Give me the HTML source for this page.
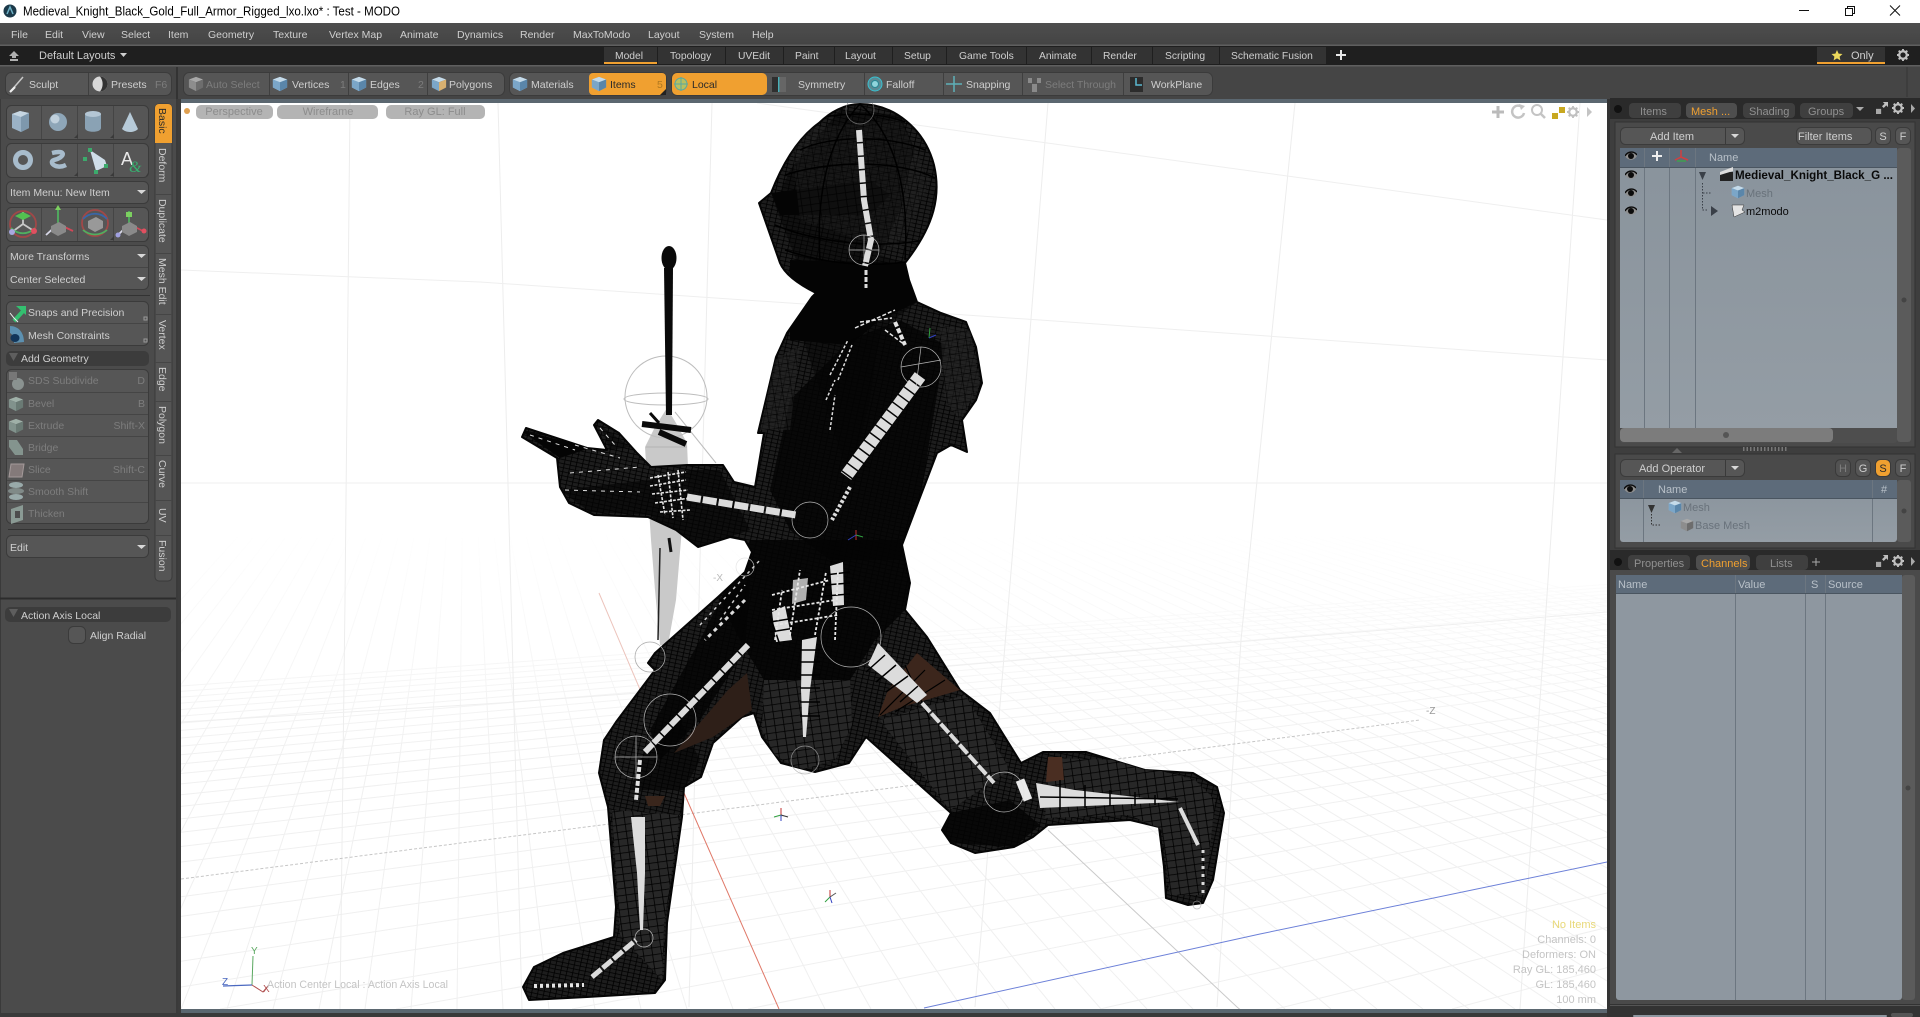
<!DOCTYPE html>
<html><head><meta charset="utf-8"><title>Medieval_Knight_Black_Gold_Full_Armor_Rigged_lxo.lxo* : Test - MODO</title>
<style>
html,body{margin:0;padding:0;background:#3c3c3c;overflow:hidden}
svg{display:block}
text{font-family:"Liberation Sans",sans-serif;font-size:11px;fill:#cfcfcf}
g.s text{font-size:10.5px}
g.t text{font-size:10.3px}
.d{fill:#7d7d7d}
.k{fill:#2a2a2a}
.h{fill:#b8c0c8}
.o{fill:#f0a030}
.r{text-anchor:end}
.m{text-anchor:middle}
.b{fill:#565656;stroke:#3b3b3b}
.v{fill:#c4c4c4}
</style></head><body>
<svg xmlns="http://www.w3.org/2000/svg" width="1920" height="1017" viewBox="0 0 1920 1017">
<defs>
<linearGradient id="fade" x1="0" y1="0" x2="0" y2="1"><stop offset="0" stop-color="#000"/><stop offset="1" stop-color="#fff"/></linearGradient>
<linearGradient id="mb" x1="0" y1="0" x2="0" y2="1"><stop offset="0" stop-color="#4e4e4e"/><stop offset="1" stop-color="#444"/></linearGradient>
<linearGradient id="lst" x1="0" y1="0" x2="0" y2="1"><stop offset="0" stop-color="#89939c"/><stop offset="1" stop-color="#949da5"/></linearGradient>
<mask id="gm" maskUnits="userSpaceOnUse" x="181" y="103" width="1426" height="906"><rect x="181" y="530" width="1426" height="230" fill="url(#fade)"/><rect x="181" y="760" width="1426" height="250" fill="#fff"/></mask>
<clipPath id="vp"><rect x="181" y="103" width="1426" height="906"/></clipPath>
<pattern id="mesh" width="6" height="4" patternUnits="userSpaceOnUse" patternTransform="rotate(12)"><rect width="6" height="4" fill="#1d1d1d"/><path d="M0 0H6M0 0V4" stroke="#000" stroke-width="1.600"/></pattern>
<pattern id="meshb" width="9" height="7" patternUnits="userSpaceOnUse" patternTransform="rotate(-8)"><rect width="9" height="7" fill="#272727"/><path d="M0 0H9M0 0V7" stroke="#000" stroke-width="1.600"/></pattern>
<path id="bp" d="M860 104C895 104 925 130 934 165C941 195 935 225 905 263L909 280L917 302L941 313L966 322L976 347L982 383L976 400L962 420L967 452L951 445L937 453L919 500L902 545L910 583L905 610L927 637L960 690L990 713L1021 763L1043 752L1086 752L1145 770L1193 773L1217 787L1224 813L1213 880L1203 903L1188 905L1166 898L1164 867L1159 827L1130 820L1048 825L1033 837L1014 847L975 853L951 843L942 830L951 813L866 737L849 763L815 772L781 763L762 737L754 713L742 717L713 743L701 777L684 787L682 817L667 923L665 980L655 993L587 997L529 1000L523 987L534 967L563 953L614 937L616 907L608 807L599 773L604 740L616 722L655 670L648 663L655 653L718 597L745 572L752 552L745 540L730 537L698 547L676 530L648 517L594 515L569 503L560 487L557 458L522 437L526 428L587 448L607 450L594 425L598 420L619 433L637 453L651 467L687 465L723 465L734 482L755 487L764 433L758 433L776 357L787 333L812 297L816 293C800 285 785 275 780 263L759 203L771 193C780 170 795 140 819 123C830 112 845 104 860 104Z"/>
<clipPath id="bc"><use href="#bp"/></clipPath>
<symbol id="cube" viewBox="0 0 18 18"><path d="M9 1L17 4V13L9 17L1 13V4Z" fill="#8fb4d2"/><path d="M1 4L9 7L17 4L9 1Z" fill="#c5dbea"/><path d="M9 7V17L1 13V4Z" fill="#7ba6c8"/><path d="M9 7V17L17 13V4Z" fill="#5a86aa"/></symbol>
<symbol id="cubeg" viewBox="0 0 18 18"><path d="M1 4L9 7L17 4L9 1Z" fill="#a8a8a8"/><path d="M9 7V17L1 13V4Z" fill="#8d8d8d"/><path d="M9 7V17L17 13V4Z" fill="#6d6d6d"/></symbol>
<symbol id="cubeo" viewBox="0 0 18 18"><path d="M1 4L9 7L17 4L9 1Z" fill="#c5dbea"/><path d="M9 7V17L1 13V4Z" fill="#7ba6c8"/><path d="M9 7V17L17 13V4Z" fill="#d8b070"/></symbol>
<symbol id="cubed" viewBox="0 0 18 18"><path d="M1 4L9 7L17 4L9 1Z" fill="#9fb0a8"/><path d="M9 7V17L1 13V4Z" fill="#81928c"/><path d="M9 7V17L17 13V4Z" fill="#6a7a74"/></symbol>
<symbol id="eye" viewBox="0 0 12 10"><path d="M0 5C3 0 9 0 12 5C9 10 3 10 0 5Z" fill="#8f8f8f"/><circle cx="6" cy="5" r="3" fill="#0c0c0c"/><path d="M0 5C3 0 9 0 12 4" fill="none" stroke="#0c0c0c" stroke-width="1.400"/></symbol>
<symbol id="gear" viewBox="0 0 14 14"><circle cx="7" cy="7" r="4.400" fill="none" stroke="#c0c0c0" stroke-width="2.600"/><path d="M7 0V3M7 11V14M0 7H3M11 7H14M2 2L4 4M10 10L12 12M2 12L4 10M10 4L12 2" stroke="#c0c0c0" stroke-width="2.200"/></symbol>
<symbol id="exp" viewBox="0 0 14 14"><path d="M0 14V8H6V14Z" fill="#a8a8a8"/><path d="M8 0H14V6L12 4L9 7L7 5L10 2Z" fill="#c0c0c0"/></symbol>
</defs>

<!-- title bar -->
<rect width="1920" height="23" fill="#fff"/>
<circle cx="10" cy="11" r="6.500" fill="#1c3a4a"/><path d="M7 14L10 7L13 14" fill="none" stroke="#6fb3c8" stroke-width="1.500"/>
<text x="23" y="15.500" textLength="377" lengthAdjust="spacingAndGlyphs" style="font-size:12.500px;fill:#000">Medieval_Knight_Black_Gold_Full_Armor_Rigged_lxo.lxo* : Test - MODO</text>
<path d="M1799 10.500H1809" stroke="#111"/>
<path d="M1845.500 8.500H1852.500V15.500H1845.500ZM1847.500 8.500V6.500H1854.500V13.500H1852.500" fill="none" stroke="#111"/>
<path d="M1890 5.500L1900 15.500M1900 5.500L1890 15.500" stroke="#111"/>

<!-- menu -->
<rect y="23" width="1920" height="22" fill="url(#mb)"/>
<rect y="44.500" width="1920" height="1.500" fill="#5f5f5f"/>
<g class="s"><text x="11" y="38">File</text><text x="45" y="38">Edit</text><text x="82" y="38">View</text><text x="121" y="38">Select</text><text x="168" y="38">Item</text><text x="208" y="38">Geometry</text><text x="273" y="38">Texture</text><text x="329" y="38">Vertex Map</text><text x="400" y="38">Animate</text><text x="457" y="38">Dynamics</text><text x="520" y="38">Render</text><text x="573" y="38">MaxToModo</text><text x="648" y="38">Layout</text><text x="699" y="38">System</text><text x="752" y="38">Help</text></g>

<!-- layout row -->
<rect y="46" width="1920" height="19" fill="#1f1f1f"/>
<path d="M9 56L14 51L19 56H16V58H12V56ZM10 59H18V61H10Z" fill="#b0b0b0"/>
<text x="39" y="59">Default Layouts</text><path d="M120 53H127L123.500 57Z" fill="#cfcfcf"/>
<g fill="#333">
<rect x="604" y="47" width="53" height="17"/><rect x="658" y="47" width="67" height="17"/><rect x="726" y="47" width="57" height="17"/><rect x="784" y="47" width="50" height="17"/><rect x="835" y="47" width="57" height="17"/><rect x="893" y="47" width="53" height="17"/><rect x="947" y="47" width="79" height="17"/><rect x="1027" y="47" width="64" height="17"/><rect x="1092" y="47" width="60" height="17"/><rect x="1153" y="47" width="66" height="17"/><rect x="1220" y="47" width="106" height="17"/>
<rect x="1817" y="47" width="68" height="17"/></g>
<rect x="604" y="62" width="53" height="2" fill="#f0a030"/><rect x="1817" y="62" width="68" height="2" fill="#f0a030"/>
<g class="t"><text x="615" y="59">Model</text><text x="670" y="59">Topology</text><text x="738" y="59">UVEdit</text><text x="795" y="59">Paint</text><text x="845" y="59">Layout</text><text x="904" y="59">Setup</text><text x="959" y="59">Game Tools</text><text x="1039" y="59">Animate</text><text x="1103" y="59">Render</text><text x="1165" y="59">Scripting</text><text x="1231" y="59">Schematic Fusion</text></g>
<path d="M1341 50V60M1336 55H1346" stroke="#e8e8e8" stroke-width="2"/>
<path d="M1837 50L1838.600 53.600L1842.500 54L1839.600 56.600L1840.400 60.400L1837 58.400L1833.600 60.400L1834.400 56.600L1831.500 54L1835.400 53.600Z" fill="#ecd85c"/>
<text x="1851" y="59">Only</text>
<use href="#gear" x="1897" y="49" width="12" height="12"/>

<!-- toolbar row -->
<rect y="65" width="1920" height="1.500" fill="#5f5f5f"/>
<rect y="66.500" width="1920" height="33" fill="#454545"/>
<rect x="176" y="67" width="2" height="32" fill="#333"/>
<rect x="1906" y="67" width="2" height="30" fill="#3d3d3d"/>
<rect x="5.500" y="72.500" width="166" height="23" rx="6" class="b"/>
<rect x="183.500" y="72.500" width="321" height="23" rx="6" class="b"/>
<rect x="509.500" y="72.500" width="157" height="23" rx="6" class="b"/>
<rect x="671.500" y="72.500" width="541" height="23" rx="6" class="b"/>
<path d="M88.500 73V95M269.500 73V95M348.500 73V95M427.500 73V95M864.500 73V95M943.500 73V95M1022.500 73V95M1123.500 73V95" stroke="#3f3f3f"/>
<rect x="589" y="73" width="77" height="22" rx="4" fill="#f0a030"/>
<rect x="672" y="73" width="95" height="22" rx="5" fill="#f0a030"/>
<path d="M10 92L23 77" stroke="#c8c8c8" stroke-width="1.500"/><path d="M10 92L15 87" stroke="#eee" stroke-width="2.200"/>
<circle cx="100" cy="84" r="7.500" fill="#d8d8d8"/><path d="M100 76.500A7.500 7.500 0 0 1 100 91.500A12 12 0 0 0 100 76.500Z" fill="#333"/>
<use href="#cubeg" x="188" y="76" width="16" height="16"/>
<use href="#cube" x="272" y="76" width="16" height="16"/>
<use href="#cube" x="351" y="76" width="16" height="16"/>
<use href="#cubeo" x="431" y="76" width="16" height="16"/>
<use href="#cube" x="512" y="76" width="16" height="16"/>
<use href="#cube" x="591" y="76" width="16" height="16"/>
<path d="M666 89L660 95H666Z" fill="#222"/>
<circle cx="681" cy="84" r="6" fill="#b8c060" stroke="#5aa8a0"/><path d="M681 77V91M674 84H688" stroke="#5aa8a0"/>
<rect x="772" y="77" width="6" height="15" fill="#2f2f2f"/><rect x="778" y="77" width="1.500" height="15" fill="#4ab0b8"/><rect x="780" y="77" width="6" height="15" fill="#666"/>
<circle cx="875" cy="84" r="7" fill="#5a8a94" stroke="#39c0d0"/><circle cx="875" cy="84" r="3.500" fill="#8fd4dc" stroke="#2a8894"/>
<path d="M954 76V92M946 84H962" stroke="#5eb0b8" stroke-width="1.500"/>
<rect x="1028" y="78" width="4" height="5" fill="#8a8a8a"/><rect x="1037" y="78" width="4" height="5" fill="#8a8a8a"/><rect x="1032" y="84" width="5" height="8" fill="#8a8a8a"/>
<rect x="1130" y="77" width="13" height="15" fill="#2c2c2c"/><path d="M1136 78V85H1142" fill="none" stroke="#5bb8d0" stroke-width="1.500"/>
<g class="s">
<text x="29" y="88">Sculpt</text><text x="111" y="88">Presets</text><text x="155" y="88" class="d">F6</text>
<text x="206" y="88" class="d">Auto Select</text><text x="292" y="88">Vertices</text><text x="340" y="88" class="d">1</text>
<text x="370" y="88">Edges</text><text x="418" y="88" class="d">2</text><text x="449" y="88">Polygons</text>
<text x="531" y="88">Materials</text><text x="610" y="88" class="k">Items</text><text x="657" y="88" style="fill:#b07820">5</text>
<text x="692" y="88" class="k">Local</text><text x="798" y="88">Symmetry</text><text x="886" y="88">Falloff</text><text x="966" y="88">Snapping</text><text x="1045" y="88" class="d">Select Through</text><text x="1151" y="88">WorkPlane</text>
</g>

<!-- left panel -->
<rect y="99" width="178" height="918" fill="#4b4b4b"/>
<rect x="176" y="99" width="5" height="918" fill="#3a3a3a"/>
<rect x="0" y="99" width="1" height="918" fill="#3a3a3a"/>
<g>
<rect x="6.500" y="105.500" width="142" height="34" rx="5" class="b"/><rect x="6.500" y="143.500" width="142" height="34" rx="5" class="b"/>
<rect x="6.500" y="181.500" width="142" height="22" rx="5" class="b"/>
<rect x="6.500" y="207.500" width="142" height="34" rx="5" class="b"/>
<rect x="6.500" y="245.500" width="142" height="44" rx="5" class="b"/>
<rect x="6.500" y="301.500" width="142" height="44" rx="5" class="b"/>
<rect x="6" y="351" width="143" height="15" rx="5" fill="#3c3c3c"/>
<rect x="6.500" y="369.500" width="142" height="154" rx="5" class="b"/>
<rect x="6.500" y="535.500" width="142" height="22" rx="5" class="b"/>
<rect x="5" y="607" width="166" height="15" rx="5" fill="#3c3c3c"/>
</g>
<path d="M41.500 106V139M77.500 106V139M113.500 106V139M41.500 144V177M77.500 144V177M113.500 144V177M41.500 208V241M77.500 208V241M113.500 208V241M7 267.500H148M7 323.500H148M7 392.500H148M7 414.500H148M7 436.500H148M7 458.500H148M7 480.500H148M7 502.500H148" stroke="#454545"/>
<path d="M8 295.500H150M8 529.500H150" stroke="#333"/>
<path d="M0 598.500H176" stroke="#2c2c2c" stroke-width="2"/>
<!-- primitives -->
<path d="M12 114L20 111L29 113V128L21 132L12 128Z" fill="#9ab2c6"/><path d="M12 114L21 117L29 113L20 111Z" fill="#c6d6e2"/><path d="M21 117V132L29 128V113Z" fill="#7e98ad"/>
<circle cx="58" cy="122" r="9" fill="#8ea6b8"/><circle cx="55" cy="119" r="4.500" fill="#c0d0dc"/>
<path d="M85 114V128C85 133 101 133 101 128V114Z" fill="#8aa2b4"/><ellipse cx="93" cy="114" rx="8" ry="3" fill="#b4c6d4"/>
<path d="M130 112L138 129C134 133 126 133 122 129Z" fill="#b6cad8"/>
<circle cx="23" cy="160" r="7.500" fill="none" stroke="#a8bccc" stroke-width="5"/>
<path d="M52 153C68 149 64 158 54 160C48 162 56 170 66 165" fill="none" stroke="#a8bccc" stroke-width="4.500"/>
<path d="M90 150L105 160L107 166L96 171Z" fill="#cfdde8"/><g fill="#3caa6c"><rect x="88" y="148" width="4" height="4"/><rect x="104" y="164" width="4" height="4"/><rect x="94" y="170" width="4" height="4"/><rect x="83" y="157" width="4" height="4"/></g>
<text x="121" y="165" style="font-size:18px;fill:#e8e8e8">A</text><text x="129" y="172" style="font-size:16px;fill:#38b070;font-family:'Liberation Serif',serif;font-style:italic">&amp;</text>
<!-- gizmos -->
<g fill="none" stroke-width="1.800">
<circle cx="23" cy="224" r="13" stroke="#a04848"/><path d="M23 212V224L12 232M23 224L34 231" stroke="#c8c8c8"/><path d="M11 228C18 235 28 235 35 228" stroke="#50b060"/>
<path d="M58 208V224" stroke="#50b060"/><path d="M58 224L73 231" stroke="#d04858"/><path d="M58 224L46 235" stroke="#d8d8e8"/>
<circle cx="95" cy="223" r="13" stroke="#a04848"/><path d="M83 219C90 212 100 212 107 219" stroke="#3a66a8"/><path d="M83 230C90 236 100 236 107 230" stroke="#50b060"/>
<path d="M129 211V224" stroke="#50b060"/><path d="M129 224L143 231" stroke="#d04858"/><path d="M129 224L118 235" stroke="#d8d8e8"/>
</g>
<path d="M15 216L23 212L31 216L23 220Z" fill="#54c050"/><circle cx="12" cy="232" r="3" fill="#a8a8e0"/><circle cx="34" cy="231" r="3" fill="#e05060"/>
<path d="M51 226L59 222L66 226V232L58 236L51 232Z" fill="#8a8a8a"/><path d="M55 210L58 205L61 210Z" fill="#7cd060"/>
<path d="M88 221L96 217L103 221V228L95 232L88 228Z" fill="#999"/>
<path d="M122 226L130 222L137 226V232L129 236L122 232Z" fill="#8a8a8a"/><rect x="126" y="212" width="6" height="5" fill="#7cd060"/><circle cx="144" cy="231" r="2.500" fill="#e05060"/><circle cx="118" cy="235" r="2.500" fill="#a0a0e0"/>
<g fill="#3a3a3a"><path d="M74 138L78 134V138ZM110 138L114 134V138ZM146 138L148 135V138ZM74 176L78 172V176ZM110 176L114 172V176ZM146 176L148 173V176ZM146 240L148 237V240ZM110 240L114 236V240Z"/></g>
<g class="s">
<text x="10" y="196">Item Menu: New Item</text>
<text x="10" y="260">More Transforms</text>
<text x="10" y="283">Center Selected</text>
<text x="28" y="316">Snaps and Precision</text><text x="28" y="339">Mesh Constraints</text>
<text x="21" y="362">Add Geometry</text>
<text x="28" y="384" class="d">SDS Subdivide</text><text x="145" y="384" class="d r">D</text>
<text x="28" y="407" class="d">Bevel</text><text x="145" y="407" class="d r">B</text>
<text x="28" y="429" class="d">Extrude</text><text x="145" y="429" class="d r">Shift-X</text>
<text x="28" y="451" class="d">Bridge</text>
<text x="28" y="473" class="d">Slice</text><text x="145" y="473" class="d r">Shift-C</text>
<text x="28" y="495" class="d">Smooth Shift</text>
<text x="28" y="517" class="d">Thicken</text>
<text x="10" y="551">Edit</text>
<text x="21" y="619">Action Axis Local</text>
<text x="90" y="639">Align Radial</text>
</g>
<path d="M137 190H146L141.500 194Z" fill="#d8d8d8"/><path d="M137 254H146L141.500 258Z" fill="#d8d8d8"/><path d="M137 277H146L141.500 281Z" fill="#d8d8d8"/>
<path d="M14 321L25 309" stroke="#34c070" stroke-width="4"/><path d="M16 306H26V315Z" fill="#34c070"/><path d="M10 313L14 318L18 322" stroke="#eee" fill="none"/>
<path d="M10 326C18 326 24 332 24 342L14 343C14 337 12 334 10 333Z" fill="#5c90b0"/><ellipse cx="15" cy="338" rx="4.500" ry="4" fill="#12365a"/>
<rect x="144" y="317" width="3" height="3" fill="none" stroke="#999"/><rect x="144" y="339" width="3" height="3" fill="none" stroke="#999"/>
<path d="M9 353H18L13.500 361Z" fill="#5e5e5e"/>
<circle cx="18" cy="384" r="6" fill="#8a9290"/><rect x="9" y="372" width="8" height="8" fill="#777"/>
<use href="#cubed" x="8" y="396" width="16" height="16"/><use href="#cubed" x="8" y="418" width="16" height="16"/>
<path d="M9 440H17L23 449V455H15L9 447Z" fill="#84948e"/>
<path d="M11 464H24L22 477H9Z" fill="#847a7a" stroke="#a49a9a"/>
<ellipse cx="16" cy="485" rx="7" ry="3" fill="#9aa"/><ellipse cx="16" cy="491" rx="8" ry="3" fill="#808a88"/><ellipse cx="16" cy="497" rx="7" ry="3" fill="#9aa"/>
<path d="M11 509L23 505V520L11 524Z" fill="#8a9a94"/><rect x="15" y="511" width="5" height="7" fill="#4d4d4d"/>
<path d="M137 545H146L141.500 549Z" fill="#d8d8d8"/>
<path d="M9 609H18L13.500 617Z" fill="#5e5e5e"/>
<rect x="68.500" y="626.500" width="17" height="17" rx="5" class="b"/>

<!-- vertical tabs -->
<path d="M155 108a4 4 0 0 1 4-4h9a4 4 0 0 1 4 4v469a4 4 0 0 1-4 4h-9a4 4 0 0 1-4-4Z" fill="#555" stroke="#3a3a3a"/>
<path d="M155 108a4 4 0 0 1 4-4h9a4 4 0 0 1 4 4v35h-17Z" fill="#f0a030"/>
<path d="M155 194.500H172M155 253.500H172M155 314.500H172M155 362.500H172M155 401.500H172M155 455.500H172M155 500.500H172M155 535.500H172" stroke="#454545"/>
<g class="s">
<text transform="translate(159 108) rotate(90)" class="k">Basic</text>
<text transform="translate(159 148) rotate(90)">Deform</text>
<text transform="translate(159 199) rotate(90)">Duplicate</text>
<text transform="translate(159 258) rotate(90)">Mesh Edit</text>
<text transform="translate(159 320) rotate(90)">Vertex</text>
<text transform="translate(159 367) rotate(90)">Edge</text>
<text transform="translate(159 406) rotate(90)">Polygon</text>
<text transform="translate(159 460) rotate(90)">Curve</text>
<text transform="translate(159 508) rotate(90)">UV</text>
<text transform="translate(159 540) rotate(90)">Fusion</text>
</g>

<!-- viewport -->
<rect x="178" y="99" width="1432" height="918" fill="#3c3c3c"/>
<rect x="181" y="99" width="1426" height="4" fill="#5b6770"/>
<rect x="181" y="1009" width="1426" height="4" fill="#5b6770"/>
<rect x="181" y="103" width="1426" height="906" fill="#fff"/>
<g clip-path="url(#vp)">
<g mask="url(#gm)" fill="none" stroke="#f0f0f0" stroke-width="1">
<path d="M465 284L-187 1009M465 284L-141 1009M465 284L-95 1009M465 284L-49 1009M465 284L-3 1009M465 284L43 1009M465 284L89 1009M465 284L135 1009M465 284L181 1009M465 284L227 1009M465 284L273 1009M465 284L319 1009M465 284L365 1009M465 284L411 1009M465 284L457 1009M465 284L503 1009M465 284L549 1009M465 284L595 1009M465 284L641 1009M465 284L687 1009M465 284L733 1009M465 284L825 1009M465 284L871 1009M465 284L917 1009M465 284L963 1009M465 284L1009 1009M465 284L1055 1009M465 284L1101 1009M465 284L1147 1009M465 284L1193 1009M465 284L1285 1009M465 284L1331 1009M465 284L1377 1009M465 284L1423 1009M465 284L1469 1009M465 284L1515 1009M465 284L1561 1009M465 284L1607 1009M465 284L1653 1009M465 284L1699 1009M465 284L1745 1009M465 284L1791 1009M465 284L1837 1009M465 284L1883 1009M465 284L1929 1009M465 284L1975 1009M465 284L2021 1009M465 284L2067 1009M465 284L2113 1009M465 284L2159 1009M465 284L2205 1009M465 284L2251 1009M465 284L2297 1009M465 284L2343 1009M465 284L2389 1009M465 284L2435 1009M465 284L2481 1009M465 284L2527 1009M465 284L2573 1009M465 284L2619 1009M465 284L2665 1009M465 284L2711 1009M465 284L2757 1009M465 284L2803 1009M465 284L2849 1009M465 284L2895 1009M465 284L2941 1009M465 284L2987 1009M465 284L3033 1009M465 284L3079 1009"/>
<path d="M3565 445L1628 1009M3565 445L1452 1009M3565 445L1276 1009M3565 445L1100 1009M3565 445L748 1009M3565 445L572 1009M3565 445L396 1009M3565 445L220 1009M3565 445L44 1009M3565 445L-132 1009M3565 445L-308 1009M3565 445L-484 1009M3565 445L-660 1009M3565 445L-1012 1009M3565 445L-1188 1009M3565 445L-1364 1009M3565 445L-1540 1009M3565 445L-1716 1009M3565 445L-1892 1009M3565 445L-2068 1009M3565 445L-2244 1009M3565 445L-2420 1009M3565 445L-2596 1009M3565 445L-2772 1009M3565 445L-2948 1009M3565 445L-3124 1009M3565 445L-3300 1009M3565 445L-3476 1009M3565 445L-3652 1009M3565 445L-3828 1009M3565 445L-4004 1009M3565 445L-4180 1009M3565 445L-4356 1009"/>
</g>
<!-- major faint lines -->
<path d="M712 103L700 560L689 1007M1048 103L1012 560L975 1007M498 103L510 560L522 1009M1295 103L1241 640L1217 1007M1580 103L1540 700L1520 1009M350 103L345 600L340 1009" fill="none" stroke="#ededed"/>
<path d="M181 270L480 282L1040 320L1607 360M181 483H1607M757 103L1040 142L1607 220M181 722L500 703L640 693L985 663L1260 640L1607 612" fill="none" stroke="#efefef"/>
<!-- axes -->
<path d="M1048 830L1237 1007L1243 1012" fill="none" stroke="#cacaca"/>
<path d="M181 879L500 838L1227 745L1420 720" fill="none" stroke="#c6c6c6" stroke-dasharray="3 2"/>
<path d="M599 593L684 793" stroke="#ecc4bc" fill="none"/><path d="M684 793L779 1009" stroke="#e07868" fill="none"/>
<path d="M924 1008L1260 934L1607 862" stroke="#6c80d8" fill="none"/>
<text x="1426" y="714" style="fill:#999;font-size:10px">-Z</text>
<text x="713" y="581" style="fill:#bbb;font-size:10px">-X</text>

<!-- sword -->
<path d="M667 408L676 423L687 443L688 467L681 540L676 600L668 645L660 645L655 590L651 540L645 447L655 427Z" fill="#c9c9c9"/>
<path d="M646 447H687" stroke="#b4b4b4"/>
<circle cx="666" cy="397" r="41" fill="none" stroke="#bdbdbd"/><ellipse cx="666" cy="399" rx="42" ry="6" fill="none" stroke="#bdbdbd"/><path d="M675 412L716 463" stroke="#bdbdbd"/>
<ellipse cx="669" cy="258" rx="7.500" ry="12" fill="#0a0a0a"/>
<path d="M664 268H673L672 415H666Z" fill="#0a0a0a"/>
<path d="M642 424L691 430M659 432L686 444" stroke="#0a0a0a" stroke-width="6"/><path d="M650 413L659 423" stroke="#0a0a0a" stroke-width="3"/>
<path d="M669 538L671 552" stroke="#111" stroke-width="3"/>
<path d="M660 548L658 640" stroke="#222" stroke-width="1.500"/>

<!-- silhouette -->
<use href="#bp" fill="url(#mesh)" stroke="#050505" stroke-width="2" stroke-linejoin="round"/>
<g clip-path="url(#bc)">
<!-- dense black -->
<g fill="#040404">
<path d="M840 110L900 115L915 150L905 180L900 210L880 255L905 263L917 302L880 330L870 400L850 480L790 300L816 293L800 270L775 205L790 170Z" opacity=".5"/>
<path d="M771 193L870 180L890 195L870 215L780 215Z"/>
<path d="M790 260L905 263L917 302L880 320L850 345L790 340Z"/>
<path d="M850 340L900 320L945 345L920 500L900 560L830 560L790 530L770 490L790 400Z" opacity=".8"/>
<path d="M750 540L900 540L910 583L905 610L875 640L850 680L770 690L740 640L720 600Z" opacity=".85"/>
<path d="M700 640L720 600L750 580L745 650L700 720L660 760L650 730Z" opacity=".8"/>
<path d="M645 750L680 720L700 760L684 790L630 790Z" opacity=".6"/>
<path d="M951 843L942 830L951 813L1010 800L1040 825L1014 847Z" opacity=".8"/>
<path d="M560 490L650 480L690 470L720 470L750 530L690 550L650 515L590 512Z" opacity=".65"/>
<path d="M520 430L590 448L560 458Z"/>
<path d="M600 425L630 447L610 450Z" opacity=".5"/>
</g>
<!-- leg lighter areas -->
<path d="M612 810L680 815L664 925L662 980L620 935Z" fill="url(#meshb)"/>
<path d="M764 680L850 680L852 725L835 760L800 770L775 755L762 730Z" fill="url(#meshb)"/>
<path d="M880 720L965 695L1010 770L950 810Z" fill="url(#meshb)"/>
<path d="M1050 758L1120 760L1195 780L1215 800L1205 895L1170 895L1162 830L1130 815L1045 818Z" fill="url(#meshb)"/>
<path d="M790 130L900 120L930 180L900 250L860 240L800 220Z" fill="url(#meshb)" opacity=".3"/>
<path d="M775 360L800 345L790 430L760 430Z" fill="url(#meshb)" opacity=".5"/>
<path d="M940 325L970 330L980 385L960 420L945 400Z" fill="url(#meshb)" opacity=".55"/>
<!-- helmet latitudes -->
<path d="M800 150C830 135 890 135 925 150M785 175C830 160 900 160 935 178M810 120C840 112 880 112 905 122M775 225C810 240 870 250 925 240M785 250C820 262 860 268 905 262M860 104C835 130 815 180 820 260M860 104C890 130 910 180 905 260" fill="none" stroke="#000" stroke-width="1.500"/>
<!-- brown patches -->
<path d="M917 653L960 690L902 707L878 717L888 690Z" fill="#3c261c"/>
<path d="M747 673L752 710L713 737L674 753L728 690Z" fill="#2e1f18"/>
<path d="M1048 757L1062 757L1064 780L1046 782Z" fill="#4a2e22"/><path d="M645 796L665 796L660 806L648 806Z" fill="#3a261c"/>
<path d="M905 665L930 720M925 670L880 715M945 680L895 712" fill="none" stroke="#000" stroke-width="1.200"/>
<!-- light bones -->
<g fill="#dcdcdc">
<path d="M802 640L817 637L810 690L806 737L803 737L801 690Z"/>
<path d="M878 643L927 695L917 703L868 665Z"/>
<path d="M1036 783L1040 808L1179 802L1075 790Z"/>
<path d="M830 566L843 562L844 605L833 606Z"/>
<path d="M772 612L785 606L792 640L776 642Z"/>
<path d="M793 580L808 578L806 600L792 604Z" opacity=".8"/>
<path d="M631 817L645 817L645 873L643 930L640 930L637 873Z"/>
</g>
<path d="M800 650H820M800 662H820M800 675H820M800 688H820M800 702H820M800 716H820M866 672L885 655M876 682L896 665M886 692L908 676M900 702L918 686M1060 780V810M1085 785V808M1110 790V806M1135 792V806M1155 795V805M1040 797L1178 799M825 575L850 572M825 585L850 583M825 596L850 594M770 622L795 618M770 632L795 628M770 616L780 645" fill="none" stroke="#000" stroke-width="1.500"/>
<g fill="none" stroke-linecap="butt">
<path d="M859 130L864 200L871 240L865 266" stroke="#dcdcdc" stroke-width="6" stroke-dasharray="12 1.500"/>
<path d="M866 270L866 288" stroke="#dcdcdc" stroke-width="3" stroke-dasharray="5 2"/>
<path d="M920 376L880 430L846 476" stroke="#dcdcdc" stroke-width="13" stroke-dasharray="8 1.500"/>
<path d="M687 497L796 515" stroke="#dcdcdc" stroke-width="7" stroke-dasharray="14 2"/>
<path d="M850 487L832 520" stroke="#dcdcdc" stroke-width="4" stroke-dasharray="3 2"/>
<path d="M748 645L645 752" stroke="#dcdcdc" stroke-width="6" stroke-dasharray="11 1.500"/>
<path d="M745 600L705 640" stroke="#dcdcdc" stroke-width="3" stroke-dasharray="4 4"/>
<path d="M922 703L994 783" stroke="#dcdcdc" stroke-width="4" stroke-dasharray="12 2"/>
<path d="M592 977L636 940" stroke="#dcdcdc" stroke-width="5" stroke-dasharray="12 2"/>
<path d="M534 986L584 985" stroke="#e4e4e4" stroke-width="4" stroke-dasharray="3 3"/>
<path d="M1180 808L1198 845" stroke="#dcdcdc" stroke-width="4"/>
<path d="M1203 850L1203 895" stroke="#dcdcdc" stroke-width="3" stroke-dasharray="3 5"/>
<path d="M1020 780L1028 800" stroke="#e8e8e8" stroke-width="9"/>
<path d="M640 760L636 800" stroke="#e0e0e0" stroke-width="4" stroke-dasharray="5 2"/>
<path d="M772 595L830 580M772 610L835 600M775 625L838 615M790 635L800 570M815 635L826 572M835 640L838 570M775 640L782 590" stroke="#e8e8e8" stroke-width="1.800" stroke-dasharray="3 2"/>
<path d="M855 328L895 310M860 322L892 318M885 330L905 345" stroke="#e4e4e4" stroke-width="1.500" stroke-dasharray="4 2"/>
<path d="M895 322L905 345" stroke="#e4e4e4" stroke-width="4" stroke-dasharray="5 2"/>
<path d="M830 375L848 340M838 380L852 345M826 400L835 380M830 430L835 395" stroke="#ddd" stroke-width="1.500" stroke-dasharray="3 2"/>
<path d="M650 478L686 472M650 486L686 480M652 494L688 490M655 503L690 498M660 512L690 510M658 475L665 515M668 472L673 518M678 470L683 520" stroke="#e4e4e4" stroke-width="1.600" stroke-dasharray="3 1.500"/>
<path d="M570 473L640 467M565 490L640 492M575 445L620 458M530 435L575 450M600 428L615 445" stroke="#ddd" stroke-width="1" stroke-dasharray="4 5"/>
<path d="M700 625L760 560M720 620L745 585" stroke="#ccc" stroke-width="1.500" stroke-dasharray="3 4"/>
</g>
</g>
<!-- white joint rings -->
<g fill="none" stroke="#e0e0e0" stroke-width=".7" opacity=".8">
<circle cx="864" cy="250" r="15"/><path d="M849 250H879M864 235V265"/>
<circle cx="921" cy="367" r="20"/><path d="M901 367L941 360M921 347L916 387"/>
<circle cx="810" cy="520" r="18"/>
<circle cx="745" cy="567" r="9"/>
<circle cx="670" cy="720" r="26"/><circle cx="636" cy="757" r="21"/><path d="M615 757H657M636 736V778"/>
<circle cx="851" cy="637" r="30"/><circle cx="805" cy="760" r="14" stroke="#aaa"/>
<circle cx="1004" cy="792" r="20"/><circle cx="644" cy="938" r="9"/><circle cx="1197" cy="905" r="4" stroke="#aaa"/>
<circle cx="860" cy="110" r="14" stroke="#888"/>
</g>
<circle cx="650" cy="657" r="15" fill="none" stroke="#aaa" stroke-width=".8"/>
<!-- gizmos -->
<g fill="none" stroke-width="1"><path d="M856 530V540" stroke="#c03030"/><path d="M856 535L848 540" stroke="#3040c0"/><path d="M856 535L863 537" stroke="#30a040"/><path d="M929 338L930 328" stroke="#30a040"/><path d="M929 338L936 335" stroke="#3040c0"/></g>
<g fill="none"><path d="M781 815V808" stroke="#c03030"/><path d="M781 815L788 817" stroke="#333"/><path d="M781 815L774 817" stroke="#30a040"/><path d="M781 815L781 821" stroke="#3040c0"/>
<path d="M830 897V890" stroke="#c03030"/><path d="M830 897L836 893" stroke="#555"/><path d="M830 897L825 902" stroke="#30a040"/><path d="M830 897L832 903" stroke="#3040c0"/></g>
<!-- axis widget -->
<path d="M253 956L252 985" stroke="#5aa860" fill="none"/><path d="M223 986L252 985" stroke="#4a68c0" fill="none" stroke-width="1.200"/><path d="M252 985L263 992L268 986" stroke="#b05050" fill="none"/>
<text x="251" y="954" style="font-size:10px;fill:#5aa860">Y</text><text x="222" y="985" style="font-size:10px;fill:#4a68c0">Z</text><text x="263" y="992" style="font-size:10px;fill:#b05050">X</text>
<text x="267" y="988" class="v" textLength="181" lengthAdjust="spacingAndGlyphs">Action Center Local : Action Axis Local</text>
<text x="1596" y="928" class="r" style="fill:#e8d878">No Items</text>
<text x="1596" y="943" class="r v">Channels: 0</text><text x="1596" y="958" class="r v">Deformers: ON</text><text x="1596" y="973" class="r v">Ray GL: 185,460</text><text x="1596" y="988" class="r v">GL: 185,460</text><text x="1596" y="1003" class="r v">100 mm</text>
<!-- viewport buttons -->
<circle cx="187" cy="111" r="3" fill="#e0a050"/>
<rect x="196" y="105" width="77" height="14" rx="5" fill="#b4b4b4"/><rect x="277" y="105" width="101" height="14" rx="5" fill="#b4b4b4"/><rect x="386" y="105" width="99" height="14" rx="5" fill="#b4b4b4"/>
<text x="234" y="115" class="m" style="fill:#8c8c8c">Perspective</text><text x="328" y="115" class="m" style="fill:#8c8c8c">Wireframe</text><text x="435" y="115" class="m" style="fill:#8c8c8c">Ray GL: Full</text>
<!-- viewport icons -->
<path d="M1498 106V118M1492 112H1504" stroke="#bbb" stroke-width="3"/>
<path d="M1522 107A6 6 0 1 0 1524 113" fill="none" stroke="#c4c4c4" stroke-width="2.500"/><path d="M1519 104L1525 106L1521 110Z" fill="#c4c4c4"/>
<circle cx="1537" cy="110" r="5" fill="none" stroke="#c4c4c4" stroke-width="2"/><path d="M1541 114L1545 118" stroke="#c4c4c4" stroke-width="2.500"/>
<rect x="1552" y="113" width="6" height="6" fill="#c8a820"/><rect x="1559" y="107" width="6" height="6" fill="#c8a820"/>
<use href="#gear" x="1567" y="106" width="12" height="12"/>
<path d="M1587 107L1592 112L1587 117Z" fill="#c4c4c4"/>
</g>

<!-- right panel -->
<rect x="1607" y="99" width="313" height="918" fill="#3e3e3e"/>
<rect x="1607" y="99" width="3" height="918" fill="#333"/>
<rect x="1610" y="98" width="310" height="21" fill="#2a2a2a"/>
<rect x="1629" y="103" width="52" height="15" rx="4" fill="#3f3f3f"/><rect x="1686" y="103" width="51" height="15" rx="4" fill="#4e4e4e"/><rect x="1743" y="103" width="52" height="15" rx="4" fill="#3f3f3f"/><rect x="1800" y="103" width="53" height="15" rx="4" fill="#3f3f3f"/>
<text x="1640" y="115" style="fill:#909090">Items</text><text x="1691" y="115" class="o">Mesh ...</text><text x="1749" y="115" style="fill:#909090">Shading</text><text x="1808" y="115" style="fill:#909090">Groups</text>
<path d="M1856 107H1864L1860 111Z" fill="#aaa"/>
<use href="#exp" x="1876" y="102" width="12" height="12"/><use href="#gear" x="1892" y="102" width="12" height="12"/><path d="M1911 104L1915 108.500L1911 113Z" fill="#aaa"/>
<circle cx="1618" cy="109" r="4" fill="#111"/>
<rect x="1615" y="122" width="300" height="325" fill="#4a4a4a" stroke="#333"/>
<rect x="1620.500" y="127.500" width="124" height="17" rx="5" class="b"/><path d="M1725.500 128V144" stroke="#3a3a3a"/><text x="1672" y="140" class="m">Add Item</text><path d="M1731 134H1739L1735 138Z" fill="#d8d8d8"/>
<rect x="1796.500" y="127.500" width="75" height="17" rx="5" class="b"/><text x="1798" y="140">Filter Items</text>
<rect x="1875.500" y="127.500" width="15" height="17" rx="5" class="b"/><text x="1883" y="140" class="m">S</text>
<rect x="1895.500" y="127.500" width="15" height="17" rx="5" class="b"/><text x="1903" y="140" class="m">F</text>
<rect x="1620" y="148" width="277" height="280" fill="url(#lst)"/>
<rect x="1620" y="148" width="277" height="19" fill="#5d6b7a"/>
<rect x="1897" y="148" width="14" height="294" rx="3" fill="#5b5b5b"/>
<path d="M1644.500 148V428M1669.500 148V428M1695.500 148V428" stroke="#6c7680"/>
<path d="M1620 167.500H1897" stroke="#4a5560"/>
<rect x="1620" y="428" width="277" height="15" rx="3" fill="#4e4e4e"/><rect x="1620" y="428" width="213" height="14" rx="4" fill="#7c7c7c"/>
<circle cx="1726" cy="435" r="3" fill="#555"/><circle cx="1904" cy="300" r="2.500" fill="#444"/>
<use href="#eye" x="1625" y="151" width="12" height="10"/><use href="#eye" x="1625" y="170" width="12" height="10"/><use href="#eye" x="1625" y="188" width="12" height="10"/><use href="#eye" x="1625" y="206" width="12" height="10"/>
<path d="M1657 151V161M1652 156H1662" stroke="#eee" stroke-width="2"/>
<path d="M1681 150V157L1675 160M1681 157L1688 160" stroke="#d04040" fill="none" stroke-width="1.500"/><path d="M1677 161H1686" stroke="#40a050" stroke-width="1.500"/>
<text x="1709" y="161" class="h">Name</text>
<path d="M1699 172H1706L1702.500 180Z" fill="#3a4048"/><path d="M1702.500 183V210H1708M1703 193H1711" fill="none" stroke="#3a4048" stroke-dasharray="1.500 1.500"/><path d="M1711 206L1718 211L1711 216Z" fill="#3a4048"/>
<rect x="1720" y="172" width="13" height="9" fill="#222"/><path d="M1720 172L1733 167V171L1720 175Z" fill="#ddd"/>
<text x="1735" y="179" style="font-weight:bold;font-size:12px;fill:#0a0a0a" textLength="158" lengthAdjust="spacingAndGlyphs">Medieval_Knight_Black_G ...</text>
<use href="#cube" x="1731" y="185" width="14" height="14"/><text x="1746" y="197" style="fill:#69727b">Mesh</text>
<path d="M1732 205H1744L1742 210L1745 212L1734 217Z" fill="#e4e4e4" stroke="#333" stroke-width=".5"/><text x="1746" y="215" style="fill:#0a0a0a">m2modo</text>

<!-- splitter -->
<path d="M1672 453L1677 448L1682 453Z" fill="#666"/>
<path d="M1743 449H1788" stroke="#777" stroke-width="4" stroke-dasharray="1.500 2"/>

<!-- lower panel -->
<rect x="1615" y="454" width="300" height="94" fill="#4a4a4a" stroke="#333"/>
<rect x="1620.500" y="459.500" width="124" height="17" rx="5" class="b"/><path d="M1725.500 460V476" stroke="#3a3a3a"/><text x="1672" y="472" class="m">Add Operator</text><path d="M1731 466H1739L1735 470Z" fill="#d8d8d8"/>
<rect x="1835.500" y="459.500" width="15" height="17" rx="5" fill="#525252" stroke="#3a3a3a"/><text x="1843" y="472" class="m d">H</text>
<rect x="1855.500" y="459.500" width="15" height="17" rx="5" class="b"/><text x="1863" y="472" class="m">G</text>
<rect x="1875.500" y="459.500" width="15" height="17" rx="5" fill="#f0a030" stroke="#3a3a3a"/><text x="1883" y="472" class="m k">S</text>
<rect x="1895.500" y="459.500" width="15" height="17" rx="5" class="b"/><text x="1903" y="472" class="m">F</text>
<rect x="1620" y="480" width="277" height="62" rx="3" fill="url(#lst)"/>
<rect x="1620" y="480" width="277" height="18" fill="#5d6b7a"/>
<rect x="1897" y="480" width="14" height="62" rx="3" fill="#5b5b5b"/><circle cx="1904" cy="511" r="2.500" fill="#444"/>
<path d="M1643.500 480V542M1872.500 480V542" stroke="#6c7680"/><path d="M1620 498.500H1897" stroke="#4a5560"/>
<use href="#eye" x="1624" y="484" width="12" height="10"/>
<text x="1658" y="493" class="h">Name</text><text x="1884" y="493" class="m h">#</text>
<path d="M1648 505H1655L1651.500 513Z" fill="#333"/><path d="M1651.500 514V525H1660" fill="none" stroke="#333" stroke-dasharray="1.500 1.500"/>
<use href="#cube" x="1668" y="500" width="14" height="14"/><text x="1683" y="511" style="fill:#69727b">Mesh</text>
<use href="#cubeg" x="1680" y="518" width="14" height="14"/><text x="1695" y="529" style="fill:#69727b">Base Mesh</text>

<!-- channels -->
<rect x="1610" y="550" width="310" height="20" fill="#2a2a2a"/>
<circle cx="1618" cy="562" r="4" fill="#111"/>
<rect x="1628" y="555" width="62" height="15" rx="4" fill="#3f3f3f"/><rect x="1696" y="555" width="54" height="15" rx="4" fill="#4e4e4e"/><rect x="1756" y="555" width="52" height="15" rx="4" fill="#3f3f3f"/>
<text x="1634" y="567" style="fill:#909090">Properties</text><text x="1701" y="567" class="o">Channels</text><text x="1770" y="567" style="fill:#909090">Lists</text>
<path d="M1816 558V566M1812 562H1820" stroke="#aaa"/>
<use href="#exp" x="1876" y="555" width="12" height="12"/><use href="#gear" x="1892" y="555" width="12" height="12"/><path d="M1911 557L1915 561.500L1911 566Z" fill="#aaa"/>
<rect x="1610" y="570" width="310" height="437" fill="#4a4a4a"/>
<rect x="1616" y="575" width="286" height="425" rx="3" fill="#8e97a0"/>
<rect x="1616" y="575" width="286" height="18" fill="#5d6b7a"/>
<rect x="1902" y="575" width="13" height="425" rx="3" fill="#5b5b5b"/><circle cx="1908" cy="788" r="2.500" fill="#444"/>
<path d="M1735.500 575V1000M1805.500 575V1000M1825.500 575V1000" stroke="#6c7680"/><path d="M1616 593.500H1902" stroke="#4a5560"/>
<text x="1618" y="588" class="h">Name</text><text x="1738" y="588" class="h">Value</text><text x="1811" y="588" class="h">S</text><text x="1828" y="588" class="h">Source</text>
<rect x="1610" y="1004" width="310" height="13" fill="#333"/>
<rect x="1610" y="1005" width="310" height="1" fill="#555"/>
<rect x="1633" y="1015" width="254" height="2" rx="1" fill="#8e97a0"/>
<rect x="1891" y="1013" width="22" height="4" rx="2" fill="#555"/>
<rect x="0" y="1013" width="1607" height="4" fill="#3a3a3a"/>
</svg>
</body></html>
